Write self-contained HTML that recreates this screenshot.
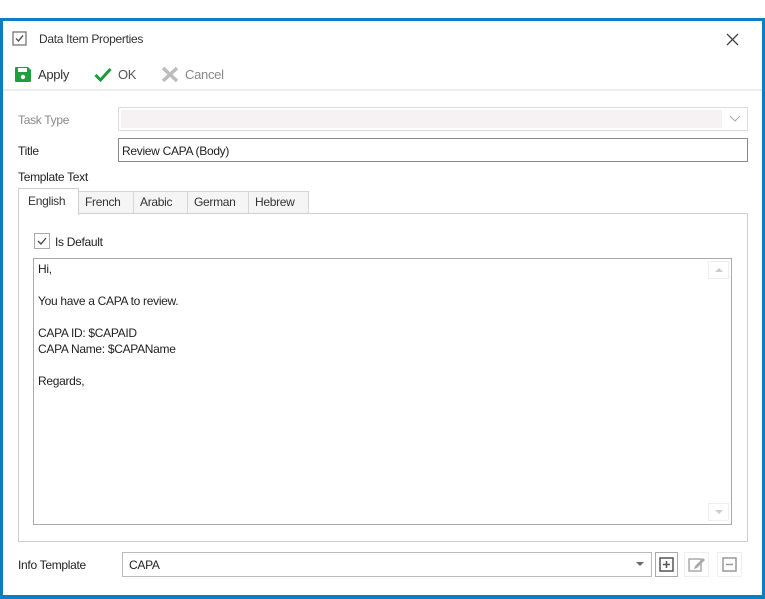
<!DOCTYPE html>
<html><head><style>
*{box-sizing:border-box;margin:0;padding:0}
body{width:765px;height:599px;background:#fff;position:relative;overflow:hidden;font-family:"Liberation Sans",sans-serif;font-size:12px;color:#222;letter-spacing:-0.3px}
.a{position:absolute}
.frame{left:0;top:18px;width:765px;height:581px;border:3px solid #0a7fc6;border-bottom-width:4px}
.lbl{position:absolute;white-space:nowrap}
.tab{position:absolute;top:191px;height:22px;border:1px solid #d6d6d6;border-bottom:none;background:#f5f5f5;padding:3px 0 0 6px;color:#333}
</style></head><body>
<div class="a frame"></div>
<!-- title -->
<svg class="a" style="left:12px;top:31px" width="15" height="15"><rect x="1" y="1" width="13" height="13" fill="#fff" stroke="#777" stroke-width="1.3"/><path d="M4 7.5 L6.5 10 L11 4.5" fill="none" stroke="#555" stroke-width="1.4"/></svg>
<div class="lbl" style="left:39px;top:32px;color:#333">Data Item Properties</div>
<svg class="a" style="left:726px;top:33px" width="13" height="13"><path d="M1 1L12 12M12 1L1 12" stroke="#444" stroke-width="1.3"/></svg>
<!-- toolbar -->
<svg class="a" style="left:14px;top:66px" width="18" height="17"><path d="M1 2 Q1 1 2 1 H14 L17 4 V15 Q17 16 16 16 H2 Q1 16 1 15Z" fill="#1e9e3c"/><rect x="4" y="2" width="9" height="4" fill="#fff"/><circle cx="9" cy="11" r="2.2" fill="#fff"/></svg>
<div class="lbl" style="left:38px;top:67px;color:#333;font-size:13px">Apply</div>
<svg class="a" style="left:94px;top:67px" width="18" height="15"><path d="M1.5 8 L6.5 13 L16.5 2" fill="none" stroke="#1c9b3a" stroke-width="3"/></svg>
<div class="lbl" style="left:118px;top:67px;color:#555;font-size:13px">OK</div>
<svg class="a" style="left:161px;top:66px" width="18" height="17"><path d="M2 2L16 15M16 2L2 15" stroke="#bdbdbd" stroke-width="3.5"/></svg>
<div class="lbl" style="left:185px;top:67px;color:#888;font-size:13px">Cancel</div>
<div class="a" style="left:3px;top:89px;width:759px;height:2px;background:#ececec"></div>
<!-- fields -->
<div class="lbl" style="left:18px;top:113px;color:#888">Task Type</div>
<div class="a" style="left:118px;top:107px;width:630px;height:24px;border:1px solid #ddd;background:#fff"><div class="a" style="left:2px;top:2px;width:601px;height:18px;background:#f6f2f4"></div></div>
<svg class="a" style="left:729px;top:115px" width="12" height="8"><path d="M1 1L6 6L11 1" fill="none" stroke="#aaa" stroke-width="1"/></svg>
<div class="lbl" style="left:18px;top:144px">Title</div>
<div class="a" style="left:118px;top:138px;width:630px;height:24px;border:1px solid #8a8a8a;background:#fff;padding:5px 0 0 3px">Review CAPA (Body)</div>
<div class="lbl" style="left:18px;top:170px">Template Text</div>
<!-- tabs -->
<div class="a" style="left:18px;top:213px;width:730px;height:329px;border:1px solid #cfcfcf;background:#fff"></div>
<div class="tab" style="left:78px;width:56px">French</div>
<div class="tab" style="left:133px;width:55px">Arabic</div>
<div class="tab" style="left:187px;width:62px">German</div>
<div class="tab" style="left:248px;width:61px">Hebrew</div>
<div class="a" style="left:18px;top:188px;width:61px;height:27px;border:1px solid #cfcfcf;border-bottom:none;background:#fff;padding:5px 0 0 9px;color:#333">English</div>
<!-- is default -->
<svg class="a" style="left:34px;top:233px" width="17" height="17"><rect x="0.5" y="0.5" width="15" height="15" fill="#fff" stroke="#aaa"/><path d="M4 8 L7 11 L12 5" fill="none" stroke="#444" stroke-width="1.3"/></svg>
<div class="lbl" style="left:55px;top:235px">Is Default</div>
<!-- memo -->
<div class="a" style="left:33px;top:258px;width:699px;height:267px;border:1px solid #aaa;background:#fff"></div>
<div class="a" style="left:38px;top:261px;line-height:16px;white-space:pre">Hi,

You have a CAPA to review.

CAPA ID: $CAPAID
CAPA Name: $CAPAName

Regards,</div>
<div class="a" style="left:708px;top:260px;width:22px;height:263px;background:#fff"></div>
<div class="a" style="left:708px;top:261px;width:21px;height:18px;border:1px solid #eee"></div>
<svg class="a" style="left:714px;top:267px" width="10" height="6"><path d="M1 5L5 1L9 5Z" fill="#ccc"/></svg>
<div class="a" style="left:708px;top:503px;width:21px;height:18px;border:1px solid #eee"></div>
<svg class="a" style="left:714px;top:509px" width="10" height="6"><path d="M1 1L5 5L9 1Z" fill="#ccc"/></svg>
<!-- info template -->
<div class="lbl" style="left:18px;top:558px">Info Template</div>
<div class="a" style="left:122px;top:552px;width:530px;height:25px;border:1px solid #bbb;background:#fff;padding:5px 0 0 6px">CAPA</div>
<svg class="a" style="left:636px;top:562px" width="8" height="5"><path d="M0 0H8L4 4Z" fill="#666"/></svg>
<div class="a" style="left:655px;top:552px;width:23px;height:25px;border:1px solid #aaa;background:#fff"></div>
<svg class="a" style="left:659px;top:557px" width="15" height="15"><rect x="1" y="1" width="13" height="13" fill="none" stroke="#555" stroke-width="1.5"/><path d="M7.5 4V11M4 7.5H11" stroke="#555" stroke-width="1.5"/></svg>
<div class="a" style="left:684px;top:552px;width:25px;height:25px;border:1px solid #eee"></div>
<svg class="a" style="left:688px;top:555px" width="18" height="18"><rect x="1" y="4" width="12" height="12" fill="none" stroke="#aaa" stroke-width="1.5"/><path d="M7 11L15 3L17 5L9 13L6 14Z" fill="#aaa"/></svg>
<div class="a" style="left:717px;top:552px;width:25px;height:25px;border:1px solid #eee"></div>
<svg class="a" style="left:722px;top:557px" width="15" height="15"><rect x="1" y="1" width="13" height="13" fill="none" stroke="#999" stroke-width="1.5"/><path d="M4 7.5H11" stroke="#999" stroke-width="1.5"/></svg>
</body></html>
